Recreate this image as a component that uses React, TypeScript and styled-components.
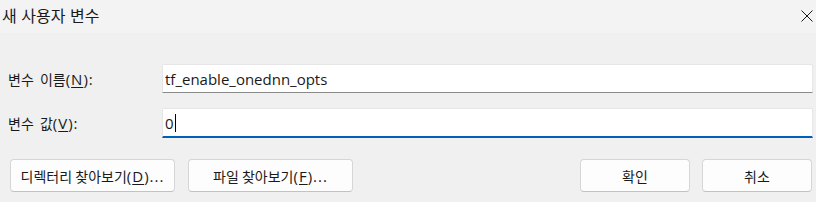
import React from "react";
import styled, { createGlobalStyle } from "styled-components";

const GlobalStyle = createGlobalStyle`
  html, body {
    margin: 0;
    padding: 0;
    background: #f0f0f0;
  }
  body {
    font-family: "Noto Sans CJK KR", "Noto Sans", sans-serif;
    color: #1a1a1a;
  }
`;

const Dialog = styled.div`
  width: 816px;
  height: 202px;
  display: flex;
  flex-direction: column;
  background: #f0f0f0;
  overflow: hidden;
`;

const TitleBar = styled.div`
  height: 33px;
  flex: none;
  display: flex;
  align-items: center;
  justify-content: space-between;
  background: #f3f3f3;
  padding: 0 3px 3px 2px;
  box-sizing: border-box;
`;

const Title = styled.span`
  font-size: 16px;
  word-spacing: 1px;
  color: #1a1a1a;
`;

const CloseButton = styled.button`
  border: none;
  background: transparent;
  padding: 0;
  width: 12px;
  height: 12px;
  display: flex;
  align-items: center;
  justify-content: center;
  margin-top: 1px;
`;

const Form = styled.div`
  display: grid;
  grid-template-columns: 154px 1fr;
  row-gap: 15px;
  padding: 31px 3px 0 8px;
`;

const Label = styled.label`
  display: flex;
  align-items: center;
  font-size: 14px;
  word-spacing: 3px;
  color: #1a1a1a;
`;

// Latin part of a caption, e.g. "(N):" — wider than the CJK font's Latin
const Latin = styled.span`
  font-family: "Open Sans", "Noto Sans", sans-serif;
  font-size: 15px;
  letter-spacing: 1px;
`;

const Key = styled.span`
  text-decoration: underline;
  text-underline-offset: 2px;
`;

const Field = styled.div<{ $focused?: boolean }>`
  height: ${(p) => (p.$focused ? "30px" : "29px")};
  box-sizing: border-box;
  background: #ffffff;
  border: 1px solid #e6e6e6;
  border-bottom: ${(p) => (p.$focused ? "2px solid #005fb8" : "1px solid #8a8a8a")};
  border-radius: 2px 2px 0 0;
  display: flex;
  align-items: center;
  padding-left: 2px;
  font-family: "Open Sans", "Noto Sans", sans-serif;
  font-size: 15px;
  color: #1a1a1a;
`;

const Caret = styled.span`
  display: inline-block;
  width: 1px;
  height: 18px;
  background: #000;
  margin-left: 1px;
`;

const Actions = styled.div`
  display: flex;
  align-items: center;
  padding: 21px 4px 0 10px;
`;

const Group = styled.div<{ $push?: boolean }>`
  display: flex;
  margin-left: ${(p) => (p.$push ? "auto" : "0")};
  gap: ${(p) => (p.$push ? "12px" : "13px")};
`;

const Button = styled.button<{ $w: number }>`
  width: ${(p) => p.$w}px;
  height: 33px;
  box-sizing: border-box;
  background: #fdfdfd;
  border: 1px solid #d6d6d6;
  border-bottom-color: #c2c2c2;
  border-radius: 4px;
  font-family: "Noto Sans CJK KR", "Noto Sans", sans-serif;
  font-size: 14px;
  color: #1a1a1a;
  padding: 0;
  display: flex;
  align-items: center;
  justify-content: center;
`;

export default function App() {
  return (
    <>
      <GlobalStyle />
      <Dialog>
        <TitleBar>
          <Title>새 사용자 변수</Title>
          <CloseButton aria-label="닫기">
            <svg width="12" height="12" viewBox="0 0 12 12">
              <path d="M0.5 0.5 L11.5 11.5 M11.5 0.5 L0.5 11.5" stroke="#1a1a1a" strokeWidth="1" fill="none" />
            </svg>
          </CloseButton>
        </TitleBar>
        <Form>
          <Label>
            변수 이름
            <Latin>
              (<Key>N</Key>):
            </Latin>
          </Label>
          <Field>tf_enable_onednn_opts</Field>
          <Label>
            변수 값
            <Latin>
              (<Key>V</Key>):
            </Latin>
          </Label>
          <Field $focused>
            0<Caret />
          </Field>
        </Form>
        <Actions>
          <Group>
            <Button $w={165}>
              디렉터리 찾아보기
              <Latin>
                (<Key>D</Key>)...
              </Latin>
            </Button>
            <Button $w={165}>
              파일 찾아보기
              <Latin>
                (<Key>F</Key>)...
              </Latin>
            </Button>
          </Group>
          <Group $push>
            <Button $w={110}>확인</Button>
            <Button $w={110}>취소</Button>
          </Group>
        </Actions>
      </Dialog>
    </>
  );
}
